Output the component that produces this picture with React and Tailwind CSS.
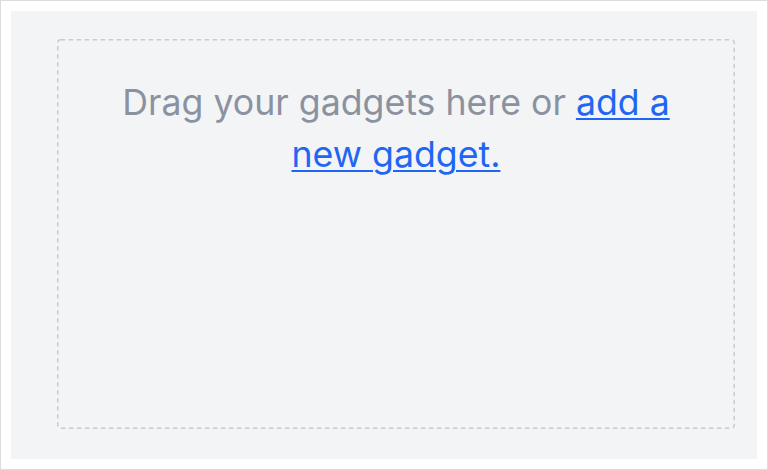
import React from 'react';

function App() {
    return (
        <div className="w-[768px] h-[470px] border border-[#dcdcdc] bg-white p-[10px]">
            <div className="h-full bg-[#f3f4f6] pl-[46px] pr-[22px] pt-[28px] pb-[30px]">
                {/* Drop zone */}
                <div className="relative h-full rounded-[3px] px-[57px] pt-[37px]">
                    <svg className="absolute inset-0 pointer-events-none" width="678" height="390" viewBox="0 0 678 390">
                        <rect x="0.75" y="0.75" width="676.5" height="388.5" rx="3" fill="none" stroke="#c8cbd0" strokeWidth="1.5" strokeDasharray="4.5 3.5" />
                    </svg>
                    <p className="text-center text-[35.7px] leading-[52px] text-[#8b929f] font-['Inter',sans-serif]">
                        Drag your gadgets here or{' '}
                        <a href="#" className="text-[#1f66f2] underline decoration-2 underline-offset-[3px]">add a new gadget.</a>
                    </p>
                </div>
            </div>
        </div>
    );
}

export default App;
